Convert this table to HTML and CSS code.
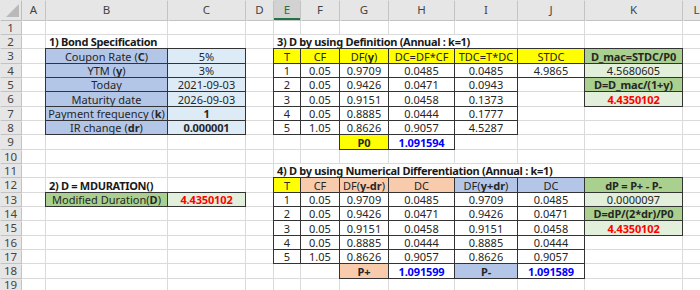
FILE: index.html
```html
<!DOCTYPE html>
<html lang="ko">
<head>
<meta charset="utf-8">
<title>Bond Duration</title>
<link rel="stylesheet" href="styles.css">
</head>
<body>
<div class="sheet">
  <div class="corner"><svg width="21" height="20" viewBox="0 0 21 20"><polygon points="19,4 19,17 6,17" fill="#b9b9b9"/></svg></div>
  <div class="ch">A</div><div class="ch">B</div><div class="ch">C</div><div class="ch">D</div><div class="ch sel">E</div><div class="ch">F</div><div class="ch">G</div><div class="ch">H</div><div class="ch">I</div><div class="ch">J</div><div class="ch">K</div><div class="ch">L</div>

  <div class="rh">1</div><div></div><div></div><div></div><div></div><div></div><div></div><div></div><div></div><div></div><div></div><div></div><div></div>

  <div class="rh">2</div><div></div><div class="t">1) Bond Specification</div><div></div><div></div><div class="t s5">3) D by using Definition (Annual : k=1)</div><div></div><div></div><div></div>

  <div class="rh">3</div><div></div><div class="b lb">Coupon Rate (<b>C</b>)</div><div class="b vb">5%</div><div></div>
  <div class="b y">T</div><div class="b y">CF</div><div class="b y">DF(<b>y</b>)</div><div class="b y">DC=DF*CF</div><div class="b y">TDC=T*DC</div><div class="b y">STDC</div><div class="b g bold">D_mac=STDC/P0</div><div></div>

  <div class="rh">4</div><div></div><div class="b lb">YTM (<b>y</b>)</div><div class="b vb">3%</div><div></div>
  <div class="b">1</div><div class="b">0.05</div><div class="b">0.9709</div><div class="b">0.0485</div><div class="b">0.0485</div><div class="b">4.9865</div><div class="b lg">4.5680605</div><div></div>

  <div class="rh">5</div><div></div><div class="b lb">Today</div><div class="b vb">2021-09-03</div><div></div>
  <div class="b">2</div><div class="b">0.05</div><div class="b">0.9426</div><div class="b">0.0471</div><div class="b">0.0943</div><div></div><div class="b g bold">D=D_mac/(1+y)</div><div></div>

  <div class="rh">6</div><div></div><div class="b lb">Maturity date</div><div class="b vb">2026-09-03</div><div></div>
  <div class="b">3</div><div class="b">0.05</div><div class="b">0.9151</div><div class="b">0.0458</div><div class="b">0.1373</div><div></div><div class="b lg red bold">4.4350102</div><div></div>

  <div class="rh">7</div><div></div><div class="b lb">Payment frequency (<b>k</b>)</div><div class="b vb bold">1</div><div></div>
  <div class="b">4</div><div class="b">0.05</div><div class="b">0.8885</div><div class="b">0.0444</div><div class="b">0.1777</div><div></div><div></div><div></div>

  <div class="rh">8</div><div></div><div class="b lb">IR change (<b>dr</b>)</div><div class="b vb bold">0.000001</div><div></div>
  <div class="b">5</div><div class="b">1.05</div><div class="b">0.8626</div><div class="b">0.9057</div><div class="b">4.5287</div><div></div><div></div><div></div>

  <div class="rh">9</div><div></div><div></div><div></div><div></div>
  <div></div><div></div><div class="b y bold">P0</div><div class="b blu bold">1.091594</div><div></div><div></div><div></div><div></div>

  <div class="rh">10</div><div></div><div></div><div></div><div></div><div></div><div></div><div></div><div></div><div></div><div></div><div></div><div></div>

  <div class="rh">11</div><div></div><div></div><div></div><div></div><div class="t s6">4) D by using Numerical Differentiation (Annual : k=1)</div><div></div><div></div>

  <div class="rh">12</div><div></div><div class="t">2) D = MDURATION()</div><div></div><div></div>
  <div class="b y">T</div><div class="b s">CF</div><div class="b s">DF(<b>y-dr</b>)</div><div class="b s">DC</div><div class="b lb">DF(<b>y+dr</b>)</div><div class="b lb">DC</div><div class="b g bold">dP = P+ - P-</div><div></div>

  <div class="rh">13</div><div></div><div class="b g">Modified Duration(<b>D</b>)</div><div class="b lg red bold">4.4350102</div><div></div>
  <div class="b">1</div><div class="b">0.05</div><div class="b">0.9709</div><div class="b">0.0485</div><div class="b">0.9709</div><div class="b">0.0485</div><div class="b lg">0.0000097</div><div></div>

  <div class="rh">14</div><div></div><div></div><div></div><div></div>
  <div class="b">2</div><div class="b">0.05</div><div class="b">0.9426</div><div class="b">0.0471</div><div class="b">0.9426</div><div class="b">0.0471</div><div class="b g bold">D=dP/(2*dr)/P0</div><div></div>

  <div class="rh">15</div><div></div><div></div><div></div><div></div>
  <div class="b">3</div><div class="b">0.05</div><div class="b">0.9151</div><div class="b">0.0458</div><div class="b">0.9151</div><div class="b">0.0458</div><div class="b lg red bold">4.4350102</div><div></div>

  <div class="rh">16</div><div></div><div></div><div></div><div></div>
  <div class="b">4</div><div class="b">0.05</div><div class="b">0.8885</div><div class="b">0.0444</div><div class="b">0.8885</div><div class="b">0.0444</div><div></div><div></div>

  <div class="rh">17</div><div></div><div></div><div></div><div></div>
  <div class="b">5</div><div class="b">1.05</div><div class="b">0.8626</div><div class="b">0.9057</div><div class="b">0.8626</div><div class="b">0.9057</div><div></div><div></div>

  <div class="rh">18</div><div></div><div></div><div></div><div></div>
  <div></div><div></div><div class="b s bold">P+</div><div class="b blu bold">1.091599</div><div class="b lb bold">P-</div><div class="b blu bold">1.091589</div><div></div><div></div>

  <div class="rh">19</div><div></div><div></div><div></div><div></div><div></div><div></div><div></div><div></div><div></div><div></div><div></div><div></div>
</div>
</body>
</html>
```

FILE: styles.css
```css
html, body {
  margin: 0;
  padding: 0;
  background: #ffffff;
  overflow: hidden;
}

.sheet {
  display: grid;
  grid-template-columns: 21px 23px 121px 77px 27px 26px 38px 48px 65px 62px 66px 97px 27px;
  grid-template-rows: 20px repeat(6, 13px 13px 14px) 12px;
  gap: 1px;
  width: max-content;
  background: #dadada;
  font-family: "Noto Sans", "Noto Sans CJK KR", sans-serif;
  font-size: 11px;
  color: #262626;
}

.sheet > div {
  background: #ffffff;
  display: flex;
  align-items: center;
  justify-content: center;
  white-space: nowrap;
  line-height: 1;
  overflow: visible;
}

.sheet > .corner {
  background: #e6e6e6;
  box-shadow: 1px 1px 0 #bdbdbd;
  align-items: flex-start;
  justify-content: flex-start;
}

.sheet > .ch {
  background: #e6e6e6;
  color: #444444;
  font-size: 11.5px;
  box-shadow: 1px 1px 0 #c3c3c3;
}

.sheet > .ch.sel {
  background: #d2d2d2;
  color: #217346;
  box-shadow: inset 0 -2px 0 #217346, 1px 1px 0 #c3c3c3;
}

.sheet > .rh {
  background: #e6e6e6;
  color: #444444;
  font-size: 11.5px;
  box-shadow: 1px 1px 0 #c3c3c3;
}

.sheet > .t {
  justify-content: flex-start;
  padding-left: 3px;
  font-weight: bold;
  letter-spacing: -0.3px;
  color: #1a1a1a;
}

.s5 { grid-column: span 5; }
.s6 { grid-column: span 6; }

.sheet > .b { box-shadow: 0 0 0 1px #333333; }

.sheet > .lb { background: #b4c6e7; }
.sheet > .vb { background: #ddebf7; }
.sheet > .y { background: #ffff00; }
.sheet > .g { background: #a9d08e; }
.sheet > .lg { background: #e2efda; }
.sheet > .s { background: #f8cbad; }

.bold { font-weight: bold; letter-spacing: -0.15px; }
.red { color: #ff0000; }
.blu { color: #0000ff; }
```
